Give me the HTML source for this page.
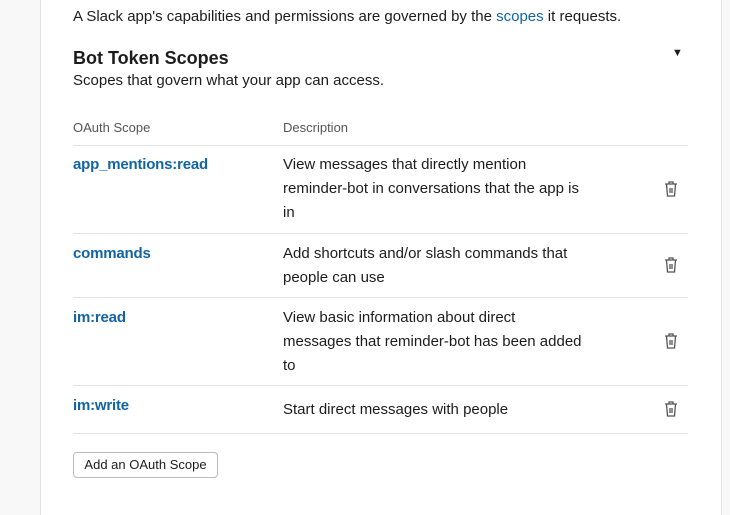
<!DOCTYPE html>
<html><head><style>
body{margin:0;width:730px;height:499px;background:#f8f8f8;font-family:"Liberation Sans",sans-serif;color:#1d1c1d;overflow:hidden;position:relative}
.card{position:absolute;left:40px;top:-5px;width:680px;height:520px;background:#fff;border-left:1px solid #e2e2e2;border-right:1px solid #e2e2e2}
.t{position:absolute;white-space:nowrap}
a{color:#1264a3;text-decoration:none}
.line{position:absolute;left:73px;width:615px;height:1px;background:#e2e2e2}
.s{position:absolute;left:73px;font-size:15px;color:#1264a3;font-weight:bold;letter-spacing:-0.2px}
.d{position:absolute;left:283px;font-size:15px;line-height:24px;white-space:nowrap}
.tr{position:absolute;left:663px}
.btn{position:absolute;left:73px;top:452px;width:143px;height:24px;border:1px solid #bbb;border-radius:4px;font-size:13px;line-height:24px;text-align:center}
</style></head><body>
<div class="card"></div>
<div class="t" style="left:73px;top:8px;font-size:15px">A Slack app's capabilities and permissions are governed by the <a>scopes</a> it requests.</div>
<div class="t" style="left:73px;top:48px;font-size:18px;font-weight:bold">Bot Token Scopes</div>
<div class="t" style="left:672px;top:47px;font-size:11px">▼</div>
<div class="t" style="left:73px;top:72px;font-size:15px">Scopes that govern what your app can access.</div>
<div class="t" style="left:73px;top:120px;font-size:13px;color:#555">OAuth Scope</div>
<div class="t" style="left:283px;top:120px;font-size:13px;color:#555">Description</div>
<div class="line" style="top:145px"></div>
<div class="s" style="top:156px">app_mentions:read</div>
<div class="d" style="top:153px">View messages that directly mention<br>reminder-bot in conversations that the app is<br>in</div>
<div class="line" style="top:233px"></div>
<div class="s" style="top:245px">commands</div>
<div class="d" style="top:242px">Add shortcuts and/or slash commands that<br>people can use</div>
<div class="line" style="top:297px"></div>
<div class="s" style="top:309px">im:read</div>
<div class="d" style="top:306px">View basic information about direct<br>messages that reminder-bot has been added<br>to</div>
<div class="line" style="top:385px"></div>
<div class="s" style="top:397px">im:write</div>
<div class="d" style="top:398px">Start direct messages with people</div>
<div class="line" style="top:433px"></div>
<div class="btn">Add an OAuth Scope</div>
<svg class="tr" style="top:180px" width="16" height="18" viewBox="0 0 16 18" fill="none" stroke="#555" stroke-width="1.3"><path d="M2 4h12M6 4V2h4v2M3.5 4l1 12h7l1-12M7 8v5M9 8v5"/></svg>
<svg class="tr" style="top:256px" width="16" height="18" viewBox="0 0 16 18" fill="none" stroke="#555" stroke-width="1.3"><path d="M2 4h12M6 4V2h4v2M3.5 4l1 12h7l1-12M7 8v5M9 8v5"/></svg>
<svg class="tr" style="top:332px" width="16" height="18" viewBox="0 0 16 18" fill="none" stroke="#555" stroke-width="1.3"><path d="M2 4h12M6 4V2h4v2M3.5 4l1 12h7l1-12M7 8v5M9 8v5"/></svg>
<svg class="tr" style="top:400px" width="16" height="18" viewBox="0 0 16 18" fill="none" stroke="#555" stroke-width="1.3"><path d="M2 4h12M6 4V2h4v2M3.5 4l1 12h7l1-12M7 8v5M9 8v5"/></svg>
</body></html>
